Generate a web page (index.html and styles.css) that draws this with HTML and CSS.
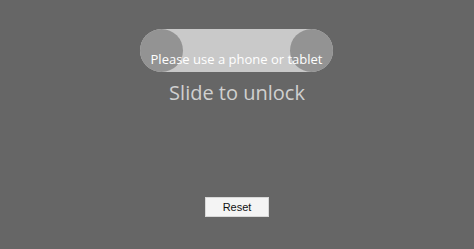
FILE: index.html
```html
<!DOCTYPE html>
<html>
<head>
<meta charset="utf-8">
<link rel="stylesheet" href="styles.css">
</head>
<body>
<div class="page">
  <div class="slider">
    <div class="knob"></div>
    <div class="knob"></div>
    <div class="hint">Please use a phone or tablet</div>
  </div>
  <div class="title">Slide to unlock</div>
  <button class="reset">Reset</button>
</div>
</body>
</html>
```
FILE: styles.css
```css
html, body {
  margin: 0;
  padding: 0;
  background: #666666;
}
.page {
  width: 474px;
  height: 249px;
  display: flex;
  flex-direction: column;
  align-items: center;
  padding-top: 29px;
  box-sizing: border-box;
}
.slider {
  position: relative;
  width: 193px;
  height: 43px;
  border-radius: 22px;
  background: #c9c9c9;
  display: flex;
  justify-content: space-between;
  margin-left: -1px;
}
.knob {
  width: 43px;
  height: 43px;
  border-radius: 50%;
  background: #939393;
}
.hint {
  position: absolute;
  left: -20px;
  right: -20px;
  top: 21px;
  text-align: center;
  color: #ffffff;
  font-family: "Open Sans", sans-serif;
  font-size: 13px;
  line-height: 18px;
}
.title {
  margin-top: 8px;
  color: #d0d0d0;
  font-family: "Open Sans", sans-serif;
  font-size: 20px;
  line-height: 26px;
}
.reset {
  margin-top: 91px;
  width: 64px;
  height: 20px;
  background: #f4f4f4;
  border: 1px solid #d8d8d8;
  border-radius: 0;
  padding: 0;
  font-family: "Liberation Sans", Arial, sans-serif;
  font-size: 11px;
  color: #111;
}
```
